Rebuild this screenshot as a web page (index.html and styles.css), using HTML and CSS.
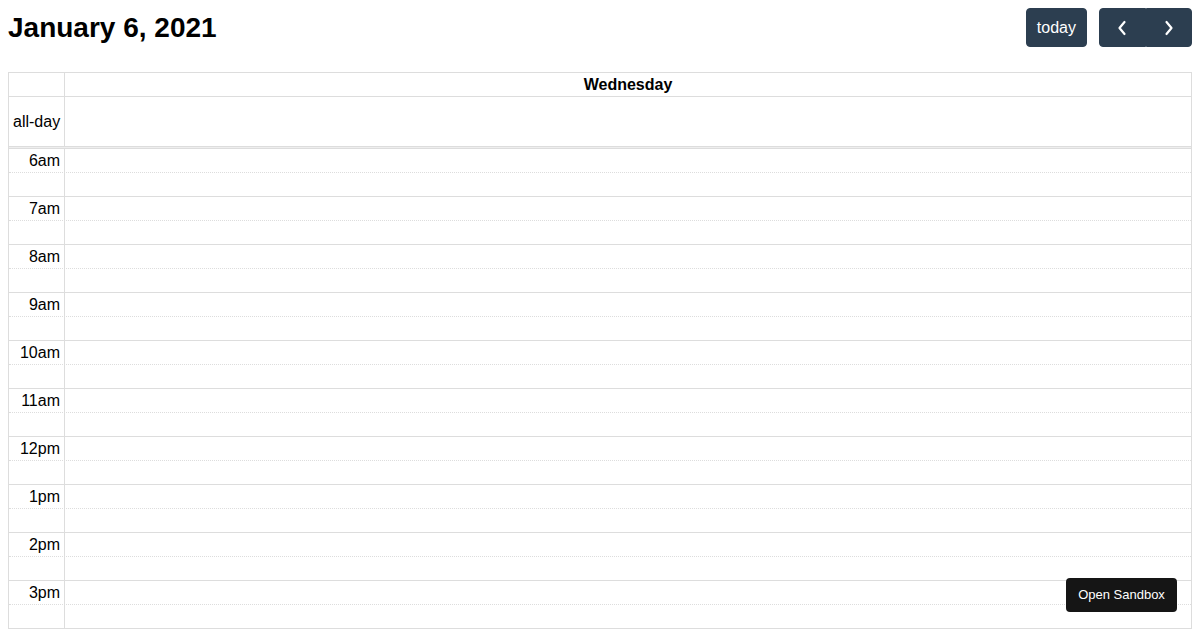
FILE: index.html
```html
<!DOCTYPE html>
<html lang="en">
<head>
    <meta charset="UTF-8">
    <title>Calendar</title>
    <link rel="stylesheet" href="styles.css">
</head>
<body>
    <div class="calendar">
        <div class="toolbar">
            <h2 class="title">January 6, 2021</h2>
            <div class="toolbar-right">
                <button class="btn">today</button>
                <div class="btn-group">
                    <button class="btn btn-icon" aria-label="prev">
                        <svg width="10" height="16" viewBox="0 0 10 16"><path d="M7.5 2 L2.5 8 L7.5 14" fill="none" stroke="#fff" stroke-width="2.2" stroke-linecap="round" stroke-linejoin="round"/></svg>
                    </button>
                    <button class="btn btn-icon" aria-label="next">
                        <svg width="10" height="16" viewBox="0 0 10 16"><path d="M2.5 2 L7.5 8 L2.5 14" fill="none" stroke="#fff" stroke-width="2.2" stroke-linecap="round" stroke-linejoin="round"/></svg>
                    </button>
                </div>
            </div>
        </div>

        <div class="grid">
            <div class="row head-row">
                <div class="axis"></div>
                <div class="day-head">Wednesday</div>
            </div>
            <div class="row allday-row">
                <div class="axis">all-day</div>
                <div class="cell"></div>
            </div>
            <div class="divider"></div>
            <div class="slats" id="slats"></div>
        </div>
    </div>

    <button class="sandbox">Open Sandbox</button>

    <script>
        // 生成时间格
        const slats = document.getElementById('slats');
        const hours = ['6am', '7am', '8am', '9am', '10am', '11am', '12pm', '1pm', '2pm', '3pm'];
        hours.forEach(label => {
            ['', 'minor'].forEach(kind => {
                const row = document.createElement('div');
                row.className = 'row slat ' + kind;
                const axis = document.createElement('div');
                axis.className = 'axis';
                axis.textContent = kind ? '' : label;
                const cell = document.createElement('div');
                cell.className = 'cell';
                row.appendChild(axis);
                row.appendChild(cell);
                slats.appendChild(row);
            });
        });
    </script>
</body>
</html>
```

FILE: styles.css
```css
html, body {
    margin: 0;
    overflow: hidden;
}

body {
    padding: 8px;
    font-family: "Liberation Sans", Arial, sans-serif;
    font-size: 16px;
    color: #000;
    background: #fff;
}

.toolbar {
    display: flex;
    justify-content: space-between;
    align-items: center;
    height: 40px;
    margin-bottom: 24px;
}

.title {
    margin: 0;
    font-size: 28px;
    font-weight: bold;
    line-height: 38px;
}

.toolbar-right {
    display: flex;
    align-items: flex-start;
    gap: 12px;
    height: 40px;
}

.btn {
    height: 39px;
    padding: 0 10px;
    background-color: #2c3e50;
    border: 1px solid #2c3e50;
    border-radius: 4px;
    color: #fff;
    font-family: "Liberation Sans", Arial, sans-serif;
    font-size: 16px;
    cursor: pointer;
    box-sizing: border-box;
}

.btn-group {
    display: flex;
}

.btn-icon {
    width: 46.5px;
    display: flex;
    align-items: center;
    justify-content: center;
    padding: 0;
}

.btn-group .btn-icon:first-child {
    border-radius: 4px 0 0 4px;
}

.btn-group .btn-icon:last-child {
    border-radius: 0 4px 4px 0;
}

.grid {
    border: 1px solid #ddd;
}

.row {
    display: grid;
    grid-template-columns: 56px 1fr;
}

.axis {
    border-right: 1px solid #ddd;
    box-sizing: border-box;
    text-align: right;
    padding: 0 4px;
    white-space: nowrap;
}

.head-row {
    height: 24px;
    border-bottom: 1px solid #ddd;
    box-sizing: border-box;
}

.day-head {
    font-weight: bold;
    text-align: center;
    line-height: 23px;
}

.allday-row {
    height: 50px;
    border-bottom: 1px solid #ddd;
    box-sizing: border-box;
}

.allday-row .axis {
    line-height: 49px;
}

.divider {
    height: 1px;
    background: #eee;
}

.slat {
    height: 24px;
    border-top: 1px solid #ddd;
    box-sizing: border-box;
}

.slat.minor {
    border-top-style: dotted;
}

.slat .axis {
    line-height: 23px;
}

.sandbox {
    position: fixed;
    right: 23px;
    bottom: 18px;
    width: 111px;
    height: 34px;
    padding: 0 0 1px;
    background: #151515;
    color: #fff;
    border: none;
    border-radius: 4px;
    font-family: "Liberation Sans", Arial, sans-serif;
    font-size: 13px;
    cursor: pointer;
}
```
